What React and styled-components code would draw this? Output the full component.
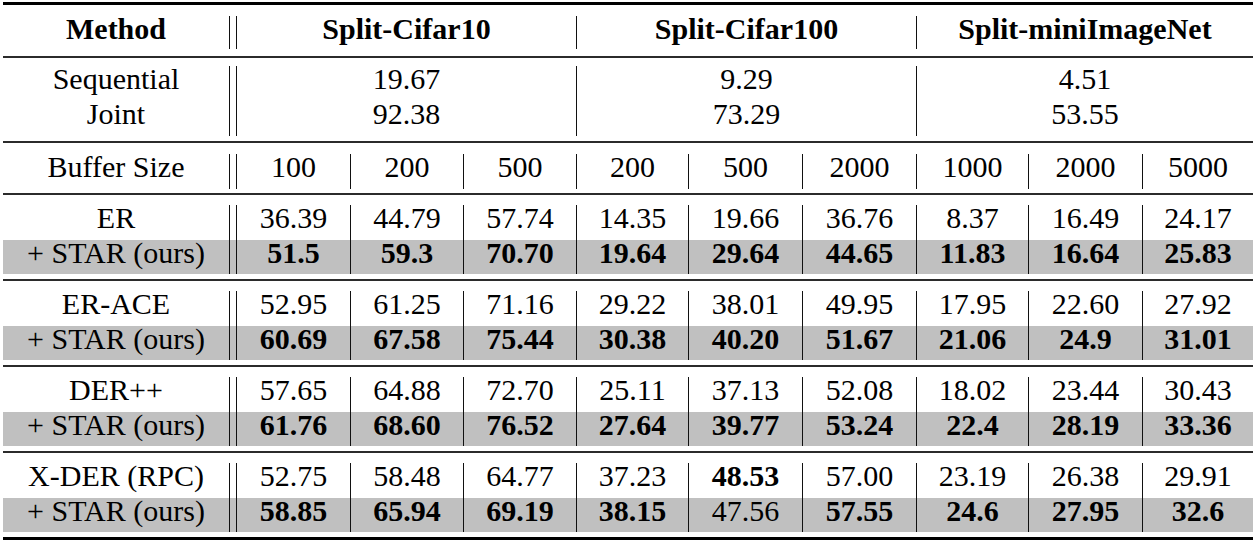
import React from 'react'
import styled, { createGlobalStyle } from 'styled-components'

const GlobalStyle = createGlobalStyle`
  html, body { margin: 0; padding: 0; background: #fff; }
  body { font-family: 'Liberation Serif', 'Times New Roman', Times, serif; color: #000; }
`;

const SERIF = "'Liberation Serif', 'Times New Roman', Times, serif";
const COLS = '226px 8px 113px 113px 113px 112px 114px 114px 112px 114px 111px';

const groups = [
  {
    name: 'ER',
    base: ['36.39', '44.79', '57.74', '14.35', '19.66', '36.76', '8.37', '16.49', '24.17'],
    star: ['51.5', '59.3', '70.70', '19.64', '29.64', '44.65', '11.83', '16.64', '25.83'],
  },
  {
    name: 'ER-ACE',
    base: ['52.95', '61.25', '71.16', '29.22', '38.01', '49.95', '17.95', '22.60', '27.92'],
    star: ['60.69', '67.58', '75.44', '30.38', '40.20', '51.67', '21.06', '24.9', '31.01'],
  },
  {
    name: 'DER++',
    base: ['57.65', '64.88', '72.70', '25.11', '37.13', '52.08', '18.02', '23.44', '30.43'],
    star: ['61.76', '68.60', '76.52', '27.64', '39.77', '53.24', '22.4', '28.19', '33.36'],
  },
  {
    name: 'X-DER (RPC)',
    base: ['52.75', '58.48', '64.77', '37.23', '48.53', '57.00', '23.19', '26.38', '29.91'],
    star: ['58.85', '65.94', '69.19', '38.15', '47.56', '57.55', '24.6', '27.95', '32.6'],
    baseBold: [4],
    starPlain: [4],
  },
];

const buffers = ['100', '200', '500', '200', '500', '2000', '1000', '2000', '5000'];
const datasets = ['Split-Cifar10', 'Split-Cifar100', 'Split-miniImageNet'];
const seq = [['19.67', '92.38'], ['9.29', '73.29'], ['4.51', '53.55']];

export default function App() {
  return (
    <>
      <GlobalStyle />
      <Page>
        <Table>
          <Rule $thick />
          <Block $top={11} $bottom={7}>
            <Row $h={33}>
              <Cell $bold>Method</Cell>
              <Bars />
              {datasets.map((d, i) => (
                <Cell key={d} $span={3} $edge={i > 0} $bold>{d}</Cell>
              ))}
            </Row>
          </Block>
          <Rule />
          <Block $top={8} $bottom={5}>
            {['Sequential', 'Joint'].map((label, r) => (
              <Row key={label} $h={35}>
                <Cell>{label}</Cell>
                <Bars />
                {seq.map((v, i) => (
                  <Cell key={i} $span={3} $edge={i > 0}>{v[r]}</Cell>
                ))}
              </Row>
            ))}
          </Block>
          <Rule />
          <Block $top={11} $bottom={4}>
            <Row $h={35}>
              <Cell>Buffer Size</Cell>
              <Bars />
              {buffers.map((b, i) => (
                <Cell key={i} $edge={i > 0}>{b}</Cell>
              ))}
            </Row>
          </Block>
          {groups.map((g) => (
            <React.Fragment key={g.name}>
              <Rule />
              <Block $top={10} $bottom={5}>
                <Row $h={35}>
                  <Cell>{g.name}</Cell>
                  <Bars />
                  {g.base.map((v, i) => (
                    <Cell key={i} $edge={i > 0} $bold={(g.baseBold || []).includes(i)}>{v}</Cell>
                  ))}
                </Row>
                <Row $h={34} $shade>
                  <Cell>+ STAR (ours)</Cell>
                  <Bars />
                  {g.star.map((v, i) => (
                    <Cell key={i} $edge={i > 0} $bold={!(g.starPlain || []).includes(i)}>{v}</Cell>
                  ))}
                </Row>
              </Block>
            </React.Fragment>
          ))}
          <Rule $thick />
        </Table>
      </Page>
    </>
  )
}

const Page = styled.div`
  padding: 2px 0 0 3px;
  width: 1258px;
  height: 543px;
  box-sizing: border-box;
  overflow: hidden;
`;

const Table = styled.div`
  width: 1250px;
  display: flex;
  flex-direction: column;
  font-family: ${SERIF};
  font-size: 30px;
`;

const Rule = styled.div`
  height: ${(p) => (p.$thick ? 3 : 2)}px;
  background: ${(p) => (p.$thick ? '#000' : '#2b2b2b')};
`;

const Block = styled.div`
  padding: ${(p) => p.$top}px 0 ${(p) => p.$bottom}px;
`;

const Row = styled.div`
  display: grid;
  grid-template-columns: ${COLS};
  height: ${(p) => p.$h}px;
  background: ${(p) => (p.$shade ? '#c0c0c0' : 'transparent')};
`;

const Cell = styled.div`
  grid-column: span ${(p) => p.$span || 1};
  box-sizing: border-box;
  text-align: center;
  white-space: nowrap;
  line-height: 26px;
  font-family: ${SERIF};
  font-weight: ${(p) => (p.$bold ? 700 : 400)};
  border-left: ${(p) => (p.$edge ? '1.5px solid #111' : 'none')};
`;

const Bars = styled.div`
  box-sizing: border-box;
  border-left: 1.5px solid #111;
  border-right: 1.5px solid #111;
`;
